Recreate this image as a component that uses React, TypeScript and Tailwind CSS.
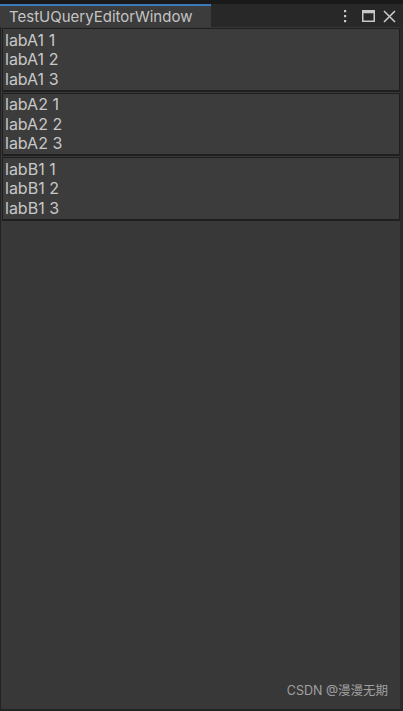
import React from 'react'

const GROUPS = [
  ['labA1 1', 'labA1 2', 'labA1 3'],
  ['labA2 1', 'labA2 2', 'labA2 3'],
  ['labB1 1', 'labB1 2', 'labB1 3'],
]

export default function App() {
  return (
    <div
      className="w-[403px] h-[711px] flex flex-col bg-[#191919] overflow-hidden"
      style={{ fontFamily: 'Inter, "Noto Sans", "Noto Sans CJK SC", sans-serif' }}
    >
      {/* Header / tab bar */}
      <div className="h-[23px] mt-[4px] flex items-stretch bg-[#282828] shrink-0">
        <div className="w-[211px] flex flex-col bg-[#3c3c3c]">
          <div className="h-[2px] bg-[#3a79bb]" />
          <div className="flex-1 flex items-center pl-[9px] text-[15px] text-[#c4c4c4] leading-none">
            TestUQueryEditorWindow
          </div>
        </div>
        <div className="flex-1 flex items-center justify-end gap-[8px] pr-[7px] pt-[1px]">
          <svg width="4" height="14" viewBox="0 0 4 14" className="mr-[7px]">
            <rect x="1" y="1" width="2.2" height="2.2" fill="#c8c8c8" />
            <rect x="1" y="6" width="2.2" height="2.2" fill="#c8c8c8" />
            <rect x="1" y="11" width="2.2" height="2.2" fill="#c8c8c8" />
          </svg>
          <svg width="13" height="12" viewBox="0 0 13 12">
            <rect x="0.75" y="0.75" width="11.5" height="10.5" fill="none" stroke="#c8c8c8" strokeWidth="1.5" />
            <rect x="0.75" y="0.75" width="11.5" height="2.5" fill="#c8c8c8" />
          </svg>
          <svg width="13" height="13" viewBox="0 0 13 13">
            <path d="M1 1 L12 12 M12 1 L1 12" stroke="#c8c8c8" strokeWidth="1.6" />
          </svg>
        </div>
      </div>

      {/* Content */}
      <div className="flex-1 flex flex-col bg-[#383838] border-l border-[#232323] border-r-[3px] border-r-[#2a2a2a] border-b-2 border-b-[#232323]">
        <div className="flex flex-col gap-[1px] pl-[1px] pt-[1px]">
          {GROUPS.map((g, i) => (
            <div key={i} className="border border-b-2 border-[#1f1f1f] bg-[#3c3c3c] py-[1px] pl-[2px]">
              {g.map(label => (
                <div key={label} className="h-[19.5px] flex items-center text-[16px] text-[#c8c8c8] leading-none">
                  {label}
                </div>
              ))}
            </div>
          ))}
        </div>
        <div className="flex-1" />
        <div className="flex justify-end pr-[12px] pb-[8px] text-[12.5px] text-[#a0a0a0]">
          CSDN @漫漫无期
        </div>
      </div>
    </div>
  )
}
